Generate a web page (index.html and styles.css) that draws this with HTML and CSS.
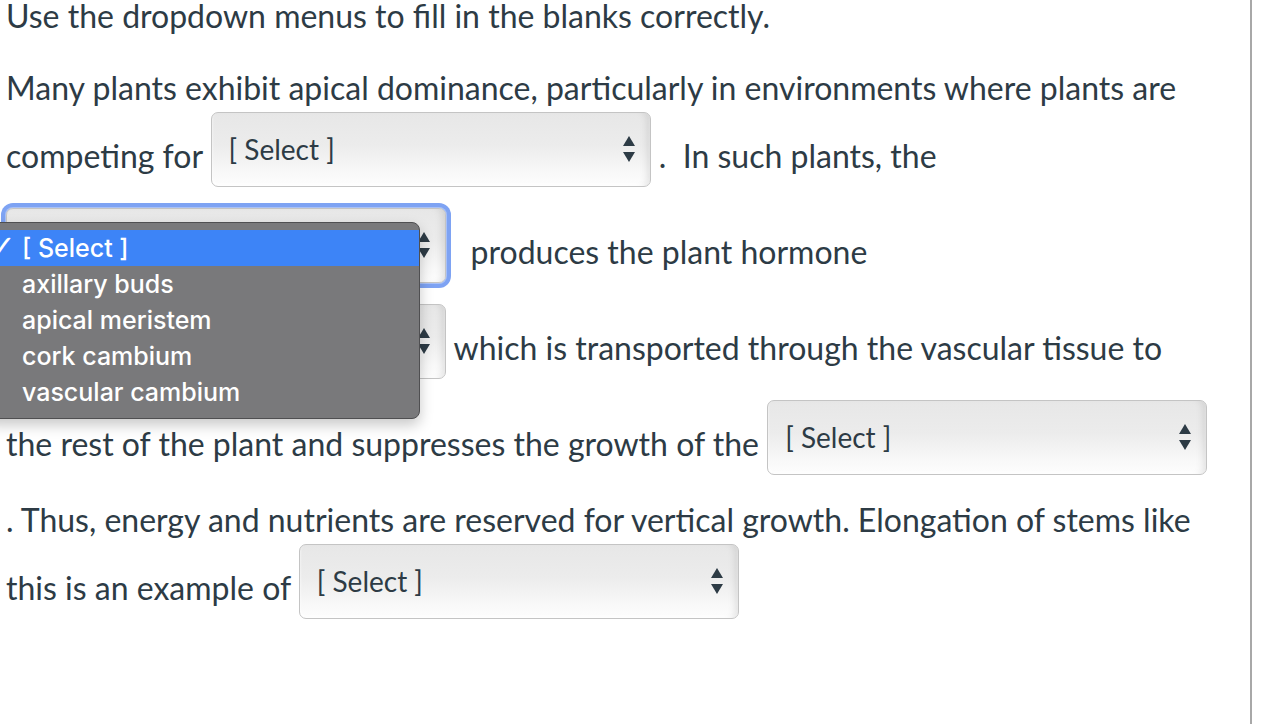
FILE: index.html
```html
<!DOCTYPE html>
<html lang="en">
<head>
  <meta charset="UTF-8">
  <meta name="viewport" content="width=device-width, initial-scale=1.0">
  <title>Fill in the blanks</title>
  <link rel="stylesheet" href="styles.css">
</head>
<body>
  <div class="page">
    <div class="question">
      <p class="intro">Use the dropdown menus to fill in the blanks correctly.</p>
      <p class="text">Many plants exhibit apical dominance, particularly in environments where plants are competing for <span class="select"><span class="select-label">[ Select ]</span><span class="arrows"></span></span>&nbsp;. &nbsp;In such plants, the <span class="select focused"><span class="select-label">[ Select ]</span><span class="arrows"></span>
          <span class="menu">
            <span class="menu-item active"><span class="check">&#10003;</span>[ Select ]</span>
            <span class="menu-item">axillary buds</span>
            <span class="menu-item">apical meristem</span>
            <span class="menu-item">cork cambium</span>
            <span class="menu-item">vascular cambium</span>
          </span>
        </span>&nbsp;&nbsp; produces the plant hormone <span class="select"><span class="select-label">[ Select ]</span><span class="arrows"></span></span> which is transported through the vascular tissue to the rest of the plant and suppresses the growth of the <span class="select"><span class="select-label">[ Select ]</span><span class="arrows"></span></span> . Thus, energy and nutrients are reserved for vertical growth. Elongation of stems like this is an example of <span class="select"><span class="select-label">[ Select ]</span><span class="arrows"></span></span></p>
    </div>
  </div>
</body>
</html>
```

FILE: styles.css
```css
body {
  margin: 0;
  background-color: #fff;
  font-family: 'Lato', 'Open Sans', sans-serif;
  color: #2d3b45;
}
.page {
  width: 1250px;
  min-height: 100vh;
  border-right: 2px solid #a8a8a8;
}
.question {
  width: 1204px;
  padding-left: 6px;
  font-size: 32px;
}
.intro {
  margin: 0 0 32px;
  line-height: 32px;
}
.text {
  margin: 0;
  line-height: 48px;
}
.select {
  display: inline-block;
  position: relative;
  box-sizing: border-box;
  width: 440px;
  height: 75px;
  margin-bottom: 21px;
  vertical-align: middle;
  border: 1px solid #c4c4c4;
  border-radius: 7px;
  background: linear-gradient(to bottom, #e7e7e7 0%, #ececec 45%, #f8f8f8 80%, #fdfdfd 100%);
  box-shadow: inset -8px 0 8px -6px rgba(0, 0, 0, 0.12), inset 0 -2px 3px rgba(255, 255, 255, 0.9);
  line-height: 1;
}
.select-label {
  position: absolute;
  left: 17px;
  top: 22px;
  font-size: 28px;
}
.arrows {
  position: absolute;
  right: 15px;
  top: 23px;
  width: 12px;
  height: 26px;
}
.arrows::before, .arrows::after {
  content: "";
  position: absolute;
  left: 0;
  border-left: 6px solid transparent;
  border-right: 6px solid transparent;
}
.arrows::before {
  top: 0;
  border-bottom: 10px solid #2d3b45;
}
.arrows::after {
  bottom: 0;
  border-top: 10px solid #2d3b45;
}
.select.focused {
  box-shadow: inset -8px 0 8px -6px rgba(0, 0, 0, 0.12), 0 0 0 1px #a9c1f6, 0 0 0 5px #7ea3f3;
}
.menu {
  position: absolute;
  left: -22px;
  top: 13px;
  width: 435px;
  box-sizing: border-box;
  padding: 7px 0 8px;
  background-color: #79797b;
  border: 1px solid #4f4f51;
  border-radius: 8px;
  box-shadow: 0 6px 14px rgba(0, 0, 0, 0.22);
  font-family: 'Inter', 'Liberation Sans', sans-serif;
  font-weight: 500;
  font-size: 25px;
  color: #fff;
  z-index: 2;
}
.menu-item {
  display: block;
  position: relative;
  height: 36px;
  line-height: 36px;
  padding-left: 36px;
}
.menu-item.active {
  background-color: #3d84f7;
}
.check {
  position: absolute;
  left: 3px;
  top: -1px;
  font-family: 'DejaVu Sans', sans-serif;
  font-size: 32px;
  font-weight: 700;
}
```
